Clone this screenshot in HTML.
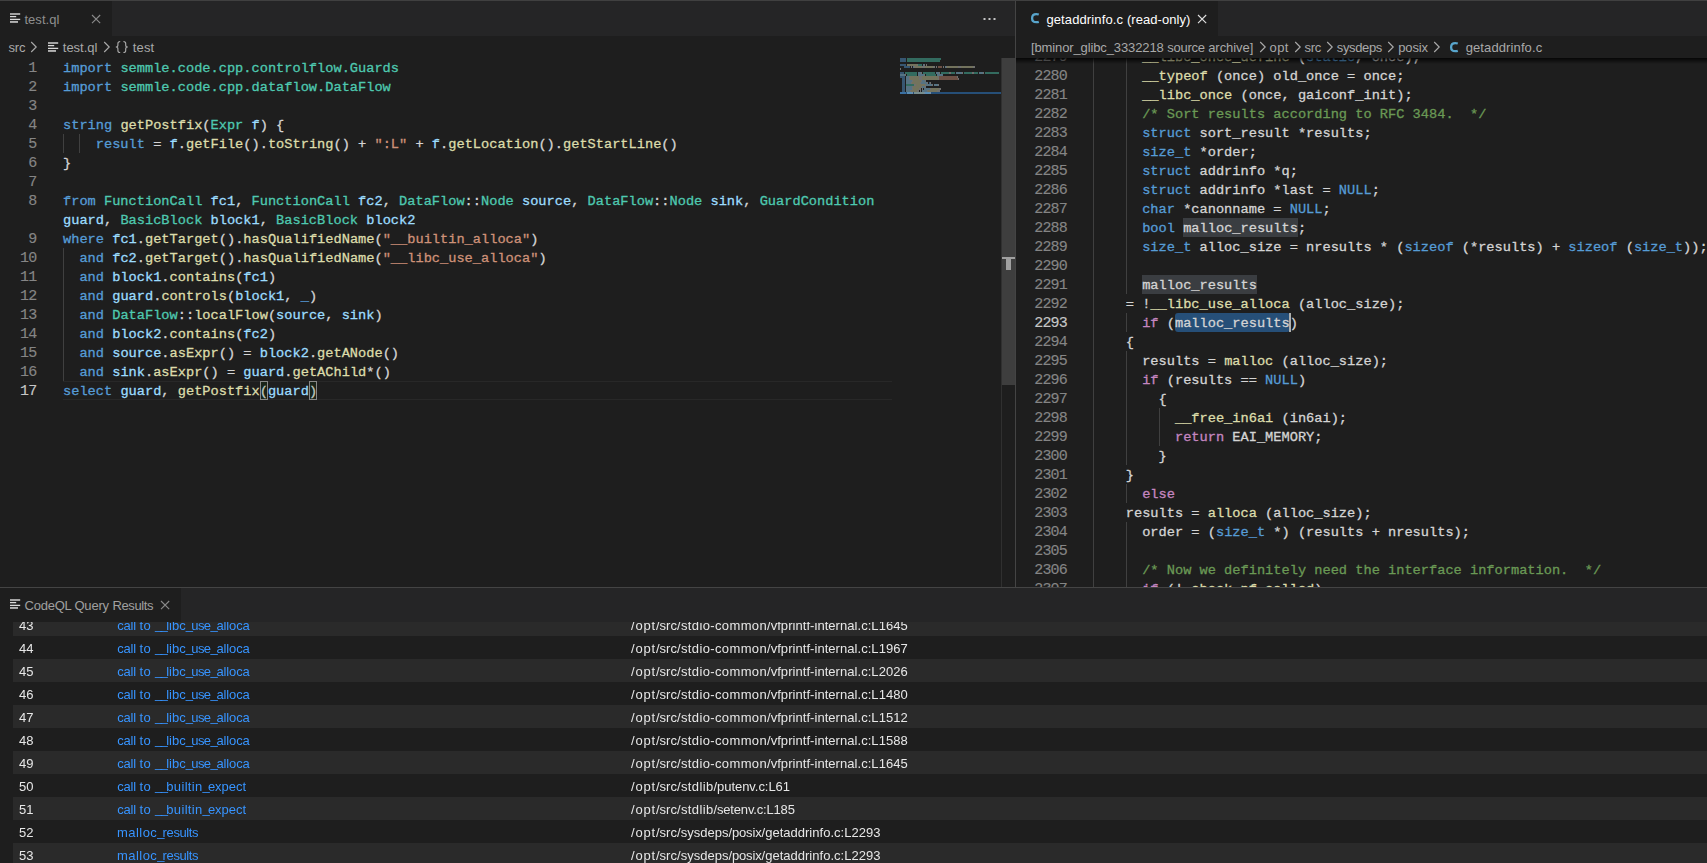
<!DOCTYPE html>
<html><head><meta charset="utf-8"><title>vscode</title>
<style>
html,body{margin:0;padding:0;background:#1e1e1e;}
body{width:1707px;height:863px;overflow:hidden;position:relative;font-family:"Liberation Sans",sans-serif;font-size:13px;color:#ccc;}
div,span{box-sizing:border-box;}
.abs{position:absolute;}
.mono{font-family:"Liberation Mono",monospace;font-size:13.67px;letter-spacing:0px;white-space:pre;color:#d4d4d4;-webkit-text-stroke:0.3px;}
.ln{position:absolute;left:0;height:19px;line-height:21px;}
.num{position:absolute;text-align:right;color:#858585;font-size:15px;letter-spacing:-0.8px;line-height:22px;-webkit-text-stroke:0.15px;}
.num.act{color:#c6c6c6;}
.k{color:#569cd6}.t{color:#4ec9b0}.s{color:#ce9178}.v{color:#9cdcfe}.f{color:#dcdcaa}.c{color:#6a9955}.p{color:#c586c0}
.ui{white-space:pre;position:absolute;}
.row{position:absolute;left:13px;right:0;height:23px;line-height:25px;font-size:13px;color:#e7e7e7;}
.row.o{background:#2a2a2a;}
.row span{position:absolute;top:0;white-space:pre;}
.row .a,.row .pth{left:-13px;}
.row .a{color:#3794ff;}
.guide{position:absolute;width:1px;background:#404040;}
</style></head><body>
<div class="abs" style="left:0;top:0;width:1707px;height:36px;background:#252526"></div>
<div class="abs" style="left:0;top:1px;width:112px;height:35px;background:#1e1e1e"></div>
<div class="abs" style="left:1016px;top:1px;width:202px;height:35px;background:#1e1e1e"></div>
<div class="abs" style="left:0;top:0;width:1707px;height:1px;background:#404040"></div>
<svg class="abs" style="left:10px;top:13px" width="11" height="11" viewBox="0 0 11 11"><rect x="0" y="0.1" width="10.2" height="1.8" fill="#b2b2b2"/><rect x="0" y="2.95" width="6.2" height="1.3" fill="#dadada"/><rect x="0" y="5.75" width="10.2" height="1.3" fill="#dadada"/><rect x="0" y="8.0" width="8" height="1.9" fill="#b2b2b2"/></svg>
<div class="ui" style="left:24.4px;top:12px;font-size:13px;color:#8f8f8f;letter-spacing:0.07px;">test.ql</div>
<svg class="abs" style="left:90.9px;top:14.1px" width="10.2" height="10.2" viewBox="-5.1 -5.1 10.2 10.2"><path d="M-4.1 -4.1 L4.1 4.1 M4.1 -4.1 L-4.1 4.1" stroke="#8a8a8a" stroke-width="1.10" fill="none"/></svg>
<svg class="abs" style="left:982.5px;top:17px" width="14" height="4" viewBox="0 0 14 4"><g fill="#c5c5c5"><rect x="0.5" y="1" width="2" height="2"/><rect x="5.5" y="1" width="2" height="2"/><rect x="10.5" y="1" width="2" height="2"/></g></svg>
<div class="ui" style="left:8.6px;top:40px;font-size:13px;color:#a9a9a9;letter-spacing:-0.24px;">src</div>
<svg class="abs" style="left:30.0px;top:41.0px" width="8" height="12" viewBox="0 0 8 12"><path d="M1.2 1 L6.2 6 L1.2 11" stroke="#a9a9a9" stroke-width="1.15" fill="none"/></svg>
<svg class="abs" style="left:48.3px;top:42px" width="11" height="11" viewBox="0 0 11 11"><rect x="0" y="0.1" width="10.2" height="1.8" fill="#b2b2b2"/><rect x="0" y="2.95" width="6.2" height="1.3" fill="#dadada"/><rect x="0" y="5.75" width="10.2" height="1.3" fill="#dadada"/><rect x="0" y="8.0" width="8" height="1.9" fill="#b2b2b2"/></svg>
<div class="ui" style="left:62.8px;top:40px;font-size:13px;color:#a9a9a9;letter-spacing:-0.01px;">test.ql</div>
<svg class="abs" style="left:102.5px;top:41.0px" width="8" height="12" viewBox="0 0 8 12"><path d="M1.2 1 L6.2 6 L1.2 11" stroke="#a9a9a9" stroke-width="1.15" fill="none"/></svg>
<svg class="abs" style="left:114px;top:40px" width="16" height="14" viewBox="114 40 16 14"><g fill="none" stroke="#a9a9a9" stroke-width="1.15"><path d="M120.2 41.5 C118.4 41.5 117.9 42.1 117.9 43.6 V45.2 C117.9 46.4 117.2 47 115.8 47 C117.2 47 117.9 47.6 117.9 48.8 V50.4 C117.9 51.9 118.4 52.5 120.2 52.5"/><path d="M123.4 41.5 C125.2 41.5 125.7 42.1 125.7 43.6 V45.2 C125.7 46.4 126.4 47 127.8 47 C126.4 47 125.7 47.6 125.7 48.8 V50.4 C125.7 51.9 125.2 52.5 123.4 52.5"/></g></svg>
<div class="ui" style="left:132.8px;top:40px;font-size:13px;color:#a9a9a9;letter-spacing:0.16px;">test</div>
<svg class="abs" style="left:1029.7px;top:11.6px" width="11" height="13" viewBox="-1 -1 11 13"><path d="M7.8 1.5 C6.9 1.2 6.2 1.15 5.3 1.15 C2.6 1.15 1.1 2.8 1.1 5.15 C1.1 7.5 2.6 9.15 5.3 9.15 C6.2 9.15 6.9 9.1 7.8 8.8" stroke="#58a5cc" stroke-width="2.3" fill="none"/></svg>
<div class="ui" style="left:1046.4px;top:12px;font-size:13px;color:#ffffff;letter-spacing:0.12px;">getaddrinfo.c </div>
<div class="ui" style="left:1126.9px;top:12px;font-size:13px;color:#ffffff;letter-spacing:0.06px;">(read-only)</div>
<svg class="abs" style="left:1197.2px;top:14.1px" width="10.2" height="10.2" viewBox="-5.1 -5.1 10.2 10.2"><path d="M-4.1 -4.1 L4.1 4.1 M4.1 -4.1 L-4.1 4.1" stroke="#e0e0e0" stroke-width="1.10" fill="none"/></svg>
<div class="ui" style="left:1031.0px;top:40px;font-size:13px;color:#a9a9a9;letter-spacing:-0.12px;">[bminor_glibc_3332218 </div>
<div class="ui" style="left:1167.2px;top:40px;font-size:13px;color:#a9a9a9;letter-spacing:-0.23px;">source </div>
<div class="ui" style="left:1208.2px;top:40px;font-size:13px;color:#a9a9a9;letter-spacing:-0.06px;">archive]</div>
<div class="ui" style="left:1269.6px;top:40px;font-size:13px;color:#a9a9a9;letter-spacing:0.38px;">opt</div>
<div class="ui" style="left:1304.6px;top:40px;font-size:13px;color:#a9a9a9;letter-spacing:-0.38px;">src</div>
<div class="ui" style="left:1336.8px;top:40px;font-size:13px;color:#a9a9a9;letter-spacing:-0.36px;">sysdeps</div>
<div class="ui" style="left:1398.2px;top:40px;font-size:13px;color:#a9a9a9;letter-spacing:-0.13px;">posix</div>
<svg class="abs" style="left:1258.5px;top:41.0px" width="8" height="12" viewBox="0 0 8 12"><path d="M1.2 1 L6.2 6 L1.2 11" stroke="#a9a9a9" stroke-width="1.15" fill="none"/></svg>
<svg class="abs" style="left:1294.0px;top:41.0px" width="8" height="12" viewBox="0 0 8 12"><path d="M1.2 1 L6.2 6 L1.2 11" stroke="#a9a9a9" stroke-width="1.15" fill="none"/></svg>
<svg class="abs" style="left:1326.0px;top:41.0px" width="8" height="12" viewBox="0 0 8 12"><path d="M1.2 1 L6.2 6 L1.2 11" stroke="#a9a9a9" stroke-width="1.15" fill="none"/></svg>
<svg class="abs" style="left:1387.0px;top:41.0px" width="8" height="12" viewBox="0 0 8 12"><path d="M1.2 1 L6.2 6 L1.2 11" stroke="#a9a9a9" stroke-width="1.15" fill="none"/></svg>
<svg class="abs" style="left:1433.0px;top:41.0px" width="8" height="12" viewBox="0 0 8 12"><path d="M1.2 1 L6.2 6 L1.2 11" stroke="#a9a9a9" stroke-width="1.15" fill="none"/></svg>
<svg class="abs" style="left:1448.8px;top:40.7px" width="11" height="13" viewBox="-1 -1 11 13"><path d="M7.8 1.5 C6.9 1.2 6.2 1.15 5.3 1.15 C2.6 1.15 1.1 2.8 1.1 5.15 C1.1 7.5 2.6 9.15 5.3 9.15 C6.2 9.15 6.9 9.1 7.8 8.8" stroke="#58a5cc" stroke-width="2.3" fill="none"/></svg>
<div class="ui" style="left:1465.7px;top:40px;font-size:13px;color:#a9a9a9;letter-spacing:0.11px;">getaddrinfo.c</div>
<div class="abs mono" style="left:0;top:58px;width:1001px;height:529px;overflow:hidden">
<div class="abs" style="left:63px;top:323px;width:829px;height:19px;border-top:1px solid #282828;border-bottom:1px solid #282828"></div>
<div class="guide" style="left:63px;top:76px;height:19px"></div>
<div class="guide" style="left:79px;top:76px;height:19px"></div>
<div class="guide" style="left:63px;top:190px;height:133px"></div>
<div class="ln" style="top:0px"><span class="num" style="left:0;width:36.5px">1</span><span class="abs" style="left:63px"><span class="k">import</span> <span class="t">semmle.code.cpp.controlflow.Guards</span></span></div>
<div class="ln" style="top:19px"><span class="num" style="left:0;width:36.5px">2</span><span class="abs" style="left:63px"><span class="k">import</span> <span class="t">semmle.code.cpp.dataflow.DataFlow</span></span></div>
<div class="ln" style="top:38px"><span class="num" style="left:0;width:36.5px">3</span><span class="abs" style="left:63px"></span></div>
<div class="ln" style="top:57px"><span class="num" style="left:0;width:36.5px">4</span><span class="abs" style="left:63px"><span class="k">string</span> <span class="f">getPostfix</span>(<span class="t">Expr</span> <span class="v">f</span>) {</span></div>
<div class="ln" style="top:76px"><span class="num" style="left:0;width:36.5px">5</span><span class="abs" style="left:63px">    <span class="k">result</span> = <span class="v">f</span>.<span class="f">getFile</span>().<span class="f">toString</span>() + <span class="s">":L"</span> + <span class="v">f</span>.<span class="f">getLocation</span>().<span class="f">getStartLine</span>()</span></div>
<div class="ln" style="top:95px"><span class="num" style="left:0;width:36.5px">6</span><span class="abs" style="left:63px">}</span></div>
<div class="ln" style="top:114px"><span class="num" style="left:0;width:36.5px">7</span><span class="abs" style="left:63px"></span></div>
<div class="ln" style="top:133px"><span class="num" style="left:0;width:36.5px">8</span><span class="abs" style="left:63px"><span class="k">from</span> <span class="t">FunctionCall</span> <span class="v">fc1</span>, <span class="t">FunctionCall</span> <span class="v">fc2</span>, <span class="t">DataFlow</span>::<span class="t">Node</span> <span class="v">source</span>, <span class="t">DataFlow</span>::<span class="t">Node</span> <span class="v">sink</span>, <span class="t">GuardCondition</span></span></div>
<div class="ln" style="top:152px"><span class="num" style="left:0;width:36.5px"></span><span class="abs" style="left:63px"><span class="v">guard</span>, <span class="t">BasicBlock</span> <span class="v">block1</span>, <span class="t">BasicBlock</span> <span class="v">block2</span></span></div>
<div class="ln" style="top:171px"><span class="num" style="left:0;width:36.5px">9</span><span class="abs" style="left:63px"><span class="k">where</span> <span class="v">fc1</span>.<span class="f">getTarget</span>().<span class="f">hasQualifiedName</span>(<span class="s">"__builtin_alloca"</span>)</span></div>
<div class="ln" style="top:190px"><span class="num" style="left:0;width:36.5px">10</span><span class="abs" style="left:63px">  <span class="k">and</span> <span class="v">fc2</span>.<span class="f">getTarget</span>().<span class="f">hasQualifiedName</span>(<span class="s">"__libc_use_alloca"</span>)</span></div>
<div class="ln" style="top:209px"><span class="num" style="left:0;width:36.5px">11</span><span class="abs" style="left:63px">  <span class="k">and</span> <span class="v">block1</span>.<span class="f">contains</span>(<span class="v">fc1</span>)</span></div>
<div class="ln" style="top:228px"><span class="num" style="left:0;width:36.5px">12</span><span class="abs" style="left:63px">  <span class="k">and</span> <span class="v">guard</span>.<span class="f">controls</span>(<span class="v">block1</span>, <span class="k">_</span>)</span></div>
<div class="ln" style="top:247px"><span class="num" style="left:0;width:36.5px">13</span><span class="abs" style="left:63px">  <span class="k">and</span> <span class="t">DataFlow</span>::<span class="f">localFlow</span>(<span class="v">source</span>, <span class="v">sink</span>)</span></div>
<div class="ln" style="top:266px"><span class="num" style="left:0;width:36.5px">14</span><span class="abs" style="left:63px">  <span class="k">and</span> <span class="v">block2</span>.<span class="f">contains</span>(<span class="v">fc2</span>)</span></div>
<div class="ln" style="top:285px"><span class="num" style="left:0;width:36.5px">15</span><span class="abs" style="left:63px">  <span class="k">and</span> <span class="v">source</span>.<span class="f">asExpr</span>() = <span class="v">block2</span>.<span class="f">getANode</span>()</span></div>
<div class="ln" style="top:304px"><span class="num" style="left:0;width:36.5px">16</span><span class="abs" style="left:63px">  <span class="k">and</span> <span class="v">sink</span>.<span class="f">asExpr</span>() = <span class="v">guard</span>.<span class="f">getAChild</span>*()</span></div>
<div class="ln" style="top:323px"><span class="num act" style="left:0;width:36.5px">17</span><span class="abs" style="left:63px"><span class="k">select</span> <span class="v">guard</span>, <span class="f">getPostfix</span>(<span class="v">guard</span>)</span></div>
<div class="abs" style="left:259.8px;top:323px;width:8.2px;height:19px;border:1px solid #888;background:rgba(0,100,0,0.1)"></div>
<div class="abs" style="left:309.0px;top:323px;width:8.2px;height:19px;border:1px solid #888;background:rgba(0,100,0,0.1)"></div>
</div>
<svg class="abs" style="left:900px;top:58px" width="101" height="40" viewBox="0 0 101 40" shape-rendering="crispEdges"><rect x="0" y="34" width="101" height="2" fill="#264f78"/><rect x="0" y="0" width="6" height="2" fill="#569cd6" opacity="0.45"/><rect x="7" y="0" width="34" height="2" fill="#4ec9b0" opacity="0.45"/><rect x="0" y="2" width="6" height="2" fill="#569cd6" opacity="0.45"/><rect x="7" y="2" width="33" height="2" fill="#4ec9b0" opacity="0.45"/><rect x="0" y="6" width="6" height="2" fill="#569cd6" opacity="0.45"/><rect x="7" y="6" width="10" height="2" fill="#dcdcaa" opacity="0.45"/><rect x="17" y="6" width="1" height="2" fill="#d4d4d4" opacity="0.45"/><rect x="18" y="6" width="4" height="2" fill="#4ec9b0" opacity="0.45"/><rect x="23" y="6" width="1" height="2" fill="#9cdcfe" opacity="0.45"/><rect x="24" y="6" width="1" height="2" fill="#d4d4d4" opacity="0.45"/><rect x="26" y="6" width="1" height="2" fill="#d4d4d4" opacity="0.45"/><rect x="4" y="8" width="6" height="2" fill="#569cd6" opacity="0.45"/><rect x="11" y="8" width="1" height="2" fill="#d4d4d4" opacity="0.45"/><rect x="13" y="8" width="1" height="2" fill="#9cdcfe" opacity="0.45"/><rect x="14" y="8" width="1" height="2" fill="#d4d4d4" opacity="0.45"/><rect x="15" y="8" width="7" height="2" fill="#dcdcaa" opacity="0.45"/><rect x="22" y="8" width="3" height="2" fill="#d4d4d4" opacity="0.45"/><rect x="25" y="8" width="8" height="2" fill="#dcdcaa" opacity="0.45"/><rect x="33" y="8" width="2" height="2" fill="#d4d4d4" opacity="0.45"/><rect x="36" y="8" width="1" height="2" fill="#d4d4d4" opacity="0.45"/><rect x="38" y="8" width="4" height="2" fill="#ce9178" opacity="0.45"/><rect x="43" y="8" width="1" height="2" fill="#d4d4d4" opacity="0.45"/><rect x="45" y="8" width="1" height="2" fill="#9cdcfe" opacity="0.45"/><rect x="46" y="8" width="1" height="2" fill="#d4d4d4" opacity="0.45"/><rect x="47" y="8" width="11" height="2" fill="#dcdcaa" opacity="0.45"/><rect x="58" y="8" width="3" height="2" fill="#d4d4d4" opacity="0.45"/><rect x="61" y="8" width="12" height="2" fill="#dcdcaa" opacity="0.45"/><rect x="73" y="8" width="2" height="2" fill="#d4d4d4" opacity="0.45"/><rect x="0" y="10" width="1" height="2" fill="#d4d4d4" opacity="0.45"/><rect x="0" y="14" width="4" height="2" fill="#569cd6" opacity="0.45"/><rect x="5" y="14" width="12" height="2" fill="#4ec9b0" opacity="0.45"/><rect x="18" y="14" width="3" height="2" fill="#9cdcfe" opacity="0.45"/><rect x="21" y="14" width="1" height="2" fill="#d4d4d4" opacity="0.45"/><rect x="23" y="14" width="12" height="2" fill="#4ec9b0" opacity="0.45"/><rect x="36" y="14" width="3" height="2" fill="#9cdcfe" opacity="0.45"/><rect x="39" y="14" width="1" height="2" fill="#d4d4d4" opacity="0.45"/><rect x="41" y="14" width="8" height="2" fill="#4ec9b0" opacity="0.45"/><rect x="49" y="14" width="2" height="2" fill="#d4d4d4" opacity="0.45"/><rect x="51" y="14" width="4" height="2" fill="#4ec9b0" opacity="0.45"/><rect x="56" y="14" width="6" height="2" fill="#9cdcfe" opacity="0.45"/><rect x="62" y="14" width="1" height="2" fill="#d4d4d4" opacity="0.45"/><rect x="64" y="14" width="8" height="2" fill="#4ec9b0" opacity="0.45"/><rect x="72" y="14" width="2" height="2" fill="#d4d4d4" opacity="0.45"/><rect x="74" y="14" width="4" height="2" fill="#4ec9b0" opacity="0.45"/><rect x="79" y="14" width="4" height="2" fill="#9cdcfe" opacity="0.45"/><rect x="83" y="14" width="1" height="2" fill="#d4d4d4" opacity="0.45"/><rect x="85" y="14" width="14" height="2" fill="#4ec9b0" opacity="0.45"/><rect x="0" y="16" width="5" height="2" fill="#9cdcfe" opacity="0.45"/><rect x="5" y="16" width="1" height="2" fill="#d4d4d4" opacity="0.45"/><rect x="7" y="16" width="10" height="2" fill="#4ec9b0" opacity="0.45"/><rect x="18" y="16" width="6" height="2" fill="#9cdcfe" opacity="0.45"/><rect x="24" y="16" width="1" height="2" fill="#d4d4d4" opacity="0.45"/><rect x="26" y="16" width="10" height="2" fill="#4ec9b0" opacity="0.45"/><rect x="37" y="16" width="6" height="2" fill="#9cdcfe" opacity="0.45"/><rect x="0" y="18" width="5" height="2" fill="#569cd6" opacity="0.45"/><rect x="6" y="18" width="3" height="2" fill="#9cdcfe" opacity="0.45"/><rect x="9" y="18" width="1" height="2" fill="#d4d4d4" opacity="0.45"/><rect x="10" y="18" width="9" height="2" fill="#dcdcaa" opacity="0.45"/><rect x="19" y="18" width="3" height="2" fill="#d4d4d4" opacity="0.45"/><rect x="22" y="18" width="16" height="2" fill="#dcdcaa" opacity="0.45"/><rect x="38" y="18" width="1" height="2" fill="#d4d4d4" opacity="0.45"/><rect x="39" y="18" width="18" height="2" fill="#ce9178" opacity="0.45"/><rect x="57" y="18" width="1" height="2" fill="#d4d4d4" opacity="0.45"/><rect x="2" y="20" width="3" height="2" fill="#569cd6" opacity="0.45"/><rect x="6" y="20" width="3" height="2" fill="#9cdcfe" opacity="0.45"/><rect x="9" y="20" width="1" height="2" fill="#d4d4d4" opacity="0.45"/><rect x="10" y="20" width="9" height="2" fill="#dcdcaa" opacity="0.45"/><rect x="19" y="20" width="3" height="2" fill="#d4d4d4" opacity="0.45"/><rect x="22" y="20" width="16" height="2" fill="#dcdcaa" opacity="0.45"/><rect x="38" y="20" width="1" height="2" fill="#d4d4d4" opacity="0.45"/><rect x="39" y="20" width="19" height="2" fill="#ce9178" opacity="0.45"/><rect x="58" y="20" width="1" height="2" fill="#d4d4d4" opacity="0.45"/><rect x="2" y="22" width="3" height="2" fill="#569cd6" opacity="0.45"/><rect x="6" y="22" width="6" height="2" fill="#9cdcfe" opacity="0.45"/><rect x="12" y="22" width="1" height="2" fill="#d4d4d4" opacity="0.45"/><rect x="13" y="22" width="8" height="2" fill="#dcdcaa" opacity="0.45"/><rect x="21" y="22" width="1" height="2" fill="#d4d4d4" opacity="0.45"/><rect x="22" y="22" width="3" height="2" fill="#9cdcfe" opacity="0.45"/><rect x="25" y="22" width="1" height="2" fill="#d4d4d4" opacity="0.45"/><rect x="2" y="24" width="3" height="2" fill="#569cd6" opacity="0.45"/><rect x="6" y="24" width="5" height="2" fill="#9cdcfe" opacity="0.45"/><rect x="11" y="24" width="1" height="2" fill="#d4d4d4" opacity="0.45"/><rect x="12" y="24" width="8" height="2" fill="#dcdcaa" opacity="0.45"/><rect x="20" y="24" width="1" height="2" fill="#d4d4d4" opacity="0.45"/><rect x="21" y="24" width="6" height="2" fill="#9cdcfe" opacity="0.45"/><rect x="27" y="24" width="1" height="2" fill="#d4d4d4" opacity="0.45"/><rect x="29" y="24" width="1" height="2" fill="#569cd6" opacity="0.45"/><rect x="30" y="24" width="1" height="2" fill="#d4d4d4" opacity="0.45"/><rect x="2" y="26" width="3" height="2" fill="#569cd6" opacity="0.45"/><rect x="6" y="26" width="8" height="2" fill="#4ec9b0" opacity="0.45"/><rect x="14" y="26" width="2" height="2" fill="#d4d4d4" opacity="0.45"/><rect x="16" y="26" width="9" height="2" fill="#dcdcaa" opacity="0.45"/><rect x="25" y="26" width="1" height="2" fill="#d4d4d4" opacity="0.45"/><rect x="26" y="26" width="6" height="2" fill="#9cdcfe" opacity="0.45"/><rect x="32" y="26" width="1" height="2" fill="#d4d4d4" opacity="0.45"/><rect x="34" y="26" width="4" height="2" fill="#9cdcfe" opacity="0.45"/><rect x="38" y="26" width="1" height="2" fill="#d4d4d4" opacity="0.45"/><rect x="2" y="28" width="3" height="2" fill="#569cd6" opacity="0.45"/><rect x="6" y="28" width="6" height="2" fill="#9cdcfe" opacity="0.45"/><rect x="12" y="28" width="1" height="2" fill="#d4d4d4" opacity="0.45"/><rect x="13" y="28" width="8" height="2" fill="#dcdcaa" opacity="0.45"/><rect x="21" y="28" width="1" height="2" fill="#d4d4d4" opacity="0.45"/><rect x="22" y="28" width="3" height="2" fill="#9cdcfe" opacity="0.45"/><rect x="25" y="28" width="1" height="2" fill="#d4d4d4" opacity="0.45"/><rect x="2" y="30" width="3" height="2" fill="#569cd6" opacity="0.45"/><rect x="6" y="30" width="6" height="2" fill="#9cdcfe" opacity="0.45"/><rect x="12" y="30" width="1" height="2" fill="#d4d4d4" opacity="0.45"/><rect x="13" y="30" width="6" height="2" fill="#dcdcaa" opacity="0.45"/><rect x="19" y="30" width="2" height="2" fill="#d4d4d4" opacity="0.45"/><rect x="22" y="30" width="1" height="2" fill="#d4d4d4" opacity="0.45"/><rect x="24" y="30" width="6" height="2" fill="#9cdcfe" opacity="0.45"/><rect x="30" y="30" width="1" height="2" fill="#d4d4d4" opacity="0.45"/><rect x="31" y="30" width="8" height="2" fill="#dcdcaa" opacity="0.45"/><rect x="39" y="30" width="2" height="2" fill="#d4d4d4" opacity="0.45"/><rect x="2" y="32" width="3" height="2" fill="#569cd6" opacity="0.45"/><rect x="6" y="32" width="4" height="2" fill="#9cdcfe" opacity="0.45"/><rect x="10" y="32" width="1" height="2" fill="#d4d4d4" opacity="0.45"/><rect x="11" y="32" width="6" height="2" fill="#dcdcaa" opacity="0.45"/><rect x="17" y="32" width="2" height="2" fill="#d4d4d4" opacity="0.45"/><rect x="20" y="32" width="1" height="2" fill="#d4d4d4" opacity="0.45"/><rect x="22" y="32" width="5" height="2" fill="#9cdcfe" opacity="0.45"/><rect x="27" y="32" width="1" height="2" fill="#d4d4d4" opacity="0.45"/><rect x="28" y="32" width="9" height="2" fill="#dcdcaa" opacity="0.45"/><rect x="37" y="32" width="3" height="2" fill="#d4d4d4" opacity="0.45"/><rect x="0" y="34" width="6" height="2" fill="#569cd6" opacity="0.45"/><rect x="7" y="34" width="5" height="2" fill="#9cdcfe" opacity="0.45"/><rect x="12" y="34" width="1" height="2" fill="#d4d4d4" opacity="0.45"/><rect x="14" y="34" width="10" height="2" fill="#dcdcaa" opacity="0.45"/><rect x="24" y="34" width="1" height="2" fill="#d4d4d4" opacity="0.45"/><rect x="25" y="34" width="5" height="2" fill="#9cdcfe" opacity="0.45"/><rect x="30" y="34" width="1" height="2" fill="#d4d4d4" opacity="0.45"/></svg>
<div class="abs" style="left:1001px;top:58px;width:14px;height:529px;border-left:1px solid #303030"></div>
<div class="abs" style="left:1002px;top:58px;width:13px;height:327px;background:#3e3e3e"></div>
<div class="abs" style="left:1002px;top:257px;width:13px;height:2px;background:#a0a0a0"></div>
<div class="abs" style="left:1006px;top:259px;width:5px;height:11px;background:#a0a0a0"></div>
<div class="abs" style="left:1015px;top:1px;width:1px;height:586px;background:#444"></div>
<div class="abs mono" style="left:1016px;top:58px;width:691px;height:529px;overflow:hidden">
<div class="guide" style="left:77px;top:0;height:529px"></div>
<div class="guide" style="left:110px;top:-11px;height:247px"></div>
<div class="guide" style="left:110px;top:255px;height:19px"></div>
<div class="guide" style="left:110px;top:293px;height:114px"></div>
<div class="guide" style="left:110px;top:426px;height:19px"></div>
<div class="guide" style="left:110px;top:464px;height:76px"></div>
<div class="guide" style="left:143px;top:350px;height:38px"></div>
<div class="abs" style="left:167.2px;top:160px;width:114.8px;height:19px;background:#3a3d41;"></div>
<div class="abs" style="left:126.2px;top:217px;width:114.8px;height:19px;background:#3a3d41;"></div>
<div class="abs" style="left:159.0px;top:255px;width:114.8px;height:19px;background:#264f78;border-radius:3px"></div>
<div class="ln" style="top:-11px"><span class="num" style="left:0;width:51px">2279</span><span class="abs" style="left:77.0px">      <span class="f">__libc_once_define</span> (<span class="k">static</span>, once);</span></div>
<div class="ln" style="top:8px"><span class="num" style="left:0;width:51px">2280</span><span class="abs" style="left:77.0px">      <span class="f">__typeof</span> (once) old_once = once;</span></div>
<div class="ln" style="top:27px"><span class="num" style="left:0;width:51px">2281</span><span class="abs" style="left:77.0px">      <span class="f">__libc_once</span> (once, gaiconf_init);</span></div>
<div class="ln" style="top:46px"><span class="num" style="left:0;width:51px">2282</span><span class="abs" style="left:77.0px">      <span class="c">/* Sort results according to RFC 3484.  */</span></span></div>
<div class="ln" style="top:65px"><span class="num" style="left:0;width:51px">2283</span><span class="abs" style="left:77.0px">      <span class="k">struct</span> sort_result *results;</span></div>
<div class="ln" style="top:84px"><span class="num" style="left:0;width:51px">2284</span><span class="abs" style="left:77.0px">      <span class="k">size_t</span> *order;</span></div>
<div class="ln" style="top:103px"><span class="num" style="left:0;width:51px">2285</span><span class="abs" style="left:77.0px">      <span class="k">struct</span> addrinfo *q;</span></div>
<div class="ln" style="top:122px"><span class="num" style="left:0;width:51px">2286</span><span class="abs" style="left:77.0px">      <span class="k">struct</span> addrinfo *last = <span class="k">NULL</span>;</span></div>
<div class="ln" style="top:141px"><span class="num" style="left:0;width:51px">2287</span><span class="abs" style="left:77.0px">      <span class="k">char</span> *canonname = <span class="k">NULL</span>;</span></div>
<div class="ln" style="top:160px"><span class="num" style="left:0;width:51px">2288</span><span class="abs" style="left:77.0px">      <span class="k">bool</span> <span class="hl">malloc_results</span>;</span></div>
<div class="ln" style="top:179px"><span class="num" style="left:0;width:51px">2289</span><span class="abs" style="left:77.0px">      <span class="k">size_t</span> alloc_size = nresults * (<span class="k">sizeof</span> (*results) + <span class="k">sizeof</span> (<span class="k">size_t</span>));</span></div>
<div class="ln" style="top:198px"><span class="num" style="left:0;width:51px">2290</span><span class="abs" style="left:77.0px"></span></div>
<div class="ln" style="top:217px"><span class="num" style="left:0;width:51px">2291</span><span class="abs" style="left:77.0px">      <span class="hl">malloc_results</span></span></div>
<div class="ln" style="top:236px"><span class="num" style="left:0;width:51px">2292</span><span class="abs" style="left:77.0px">    = !<span class="f">__libc_use_alloca</span> (alloc_size);</span></div>
<div class="ln" style="top:255px"><span class="num act" style="left:0;width:51px">2293</span><span class="abs" style="left:77.0px">      <span class="p">if</span> (<span class="sel">malloc_results</span>)</span></div>
<div class="ln" style="top:274px"><span class="num" style="left:0;width:51px">2294</span><span class="abs" style="left:77.0px">    {</span></div>
<div class="ln" style="top:293px"><span class="num" style="left:0;width:51px">2295</span><span class="abs" style="left:77.0px">      results = <span class="f">malloc</span> (alloc_size);</span></div>
<div class="ln" style="top:312px"><span class="num" style="left:0;width:51px">2296</span><span class="abs" style="left:77.0px">      <span class="p">if</span> (results == <span class="k">NULL</span>)</span></div>
<div class="ln" style="top:331px"><span class="num" style="left:0;width:51px">2297</span><span class="abs" style="left:77.0px">        {</span></div>
<div class="ln" style="top:350px"><span class="num" style="left:0;width:51px">2298</span><span class="abs" style="left:77.0px">          <span class="f">__free_in6ai</span> (in6ai);</span></div>
<div class="ln" style="top:369px"><span class="num" style="left:0;width:51px">2299</span><span class="abs" style="left:77.0px">          <span class="p">return</span> EAI_MEMORY;</span></div>
<div class="ln" style="top:388px"><span class="num" style="left:0;width:51px">2300</span><span class="abs" style="left:77.0px">        }</span></div>
<div class="ln" style="top:407px"><span class="num" style="left:0;width:51px">2301</span><span class="abs" style="left:77.0px">    }</span></div>
<div class="ln" style="top:426px"><span class="num" style="left:0;width:51px">2302</span><span class="abs" style="left:77.0px">      <span class="p">else</span></span></div>
<div class="ln" style="top:445px"><span class="num" style="left:0;width:51px">2303</span><span class="abs" style="left:77.0px">    results = <span class="f">alloca</span> (alloc_size);</span></div>
<div class="ln" style="top:464px"><span class="num" style="left:0;width:51px">2304</span><span class="abs" style="left:77.0px">      order = (<span class="k">size_t</span> *) (results + nresults);</span></div>
<div class="ln" style="top:483px"><span class="num" style="left:0;width:51px">2305</span><span class="abs" style="left:77.0px"></span></div>
<div class="ln" style="top:502px"><span class="num" style="left:0;width:51px">2306</span><span class="abs" style="left:77.0px">      <span class="c">/* Now we definitely need the interface information.  */</span></span></div>
<div class="ln" style="top:521px"><span class="num" style="left:0;width:51px">2307</span><span class="abs" style="left:77.0px">      <span class="p">if</span> (! <span class="f">check_pf_called</span>)</span></div>
<div class="abs" style="left:272.8px;top:255px;width:2px;height:19px;background:#aeafad"></div>
<div class="abs" style="left:0;top:0;width:691px;height:6px;background:linear-gradient(#000000cc,#00000000)"></div>
</div>
<div class="abs" style="left:0;top:587px;width:1707px;height:1px;background:#444"></div>
<div class="abs" style="left:0;top:588px;width:1707px;height:34px;background:#252526"></div>
<div class="abs" style="left:0;top:588px;width:181px;height:34px;background:#1e1e1e"></div>
<svg class="abs" style="left:10px;top:599px" width="11" height="11" viewBox="0 0 11 11"><rect x="0" y="0.1" width="10.2" height="1.8" fill="#b2b2b2"/><rect x="0" y="2.95" width="6.2" height="1.3" fill="#dadada"/><rect x="0" y="5.75" width="10.2" height="1.3" fill="#dadada"/><rect x="0" y="8.0" width="8" height="1.9" fill="#b2b2b2"/></svg>
<div class="ui" style="left:24.6px;top:598px;font-size:13px;color:#a0a0a0;letter-spacing:-0.25px;">CodeQL </div>
<div class="ui" style="left:74.4px;top:598px;font-size:13px;color:#a0a0a0;letter-spacing:-0.17px;">Query </div>
<div class="ui" style="left:112.4px;top:598px;font-size:13px;color:#a0a0a0;letter-spacing:-0.36px;">Results</div>
<svg class="abs" style="left:159.9px;top:600.1px" width="10.2" height="10.2" viewBox="-5.1 -5.1 10.2 10.2"><path d="M-4.1 -4.1 L4.1 4.1 M4.1 -4.1 L-4.1 4.1" stroke="#8a8a8a" stroke-width="1.10" fill="none"/></svg>
<div class="abs" style="left:0;top:622px;width:1707px;height:241px;overflow:hidden;background:#1e1e1e">
<div class="row o" style="top:-9px"></div>
<div class="row o" style="top:37px"></div>
<div class="row o" style="top:83px"></div>
<div class="row o" style="top:129px"></div>
<div class="row o" style="top:175px"></div>
<div class="row o" style="top:221px"></div>
</div>
<div class="abs" style="left:0;top:622px;width:1707px;height:241px;overflow:hidden;will-change:transform">
<div class="row" style="top:-9px"><span style="left:6px">43</span><span class="a"><span style="left:117.2px;letter-spacing:-0.16px">call </span><span style="left:139.5px;letter-spacing:0.35px">to </span><span style="left:155.0px;letter-spacing:-1.63px;top:-1px">__</span><span style="left:166.2px;letter-spacing:-0.00px">libc</span><span style="left:185.7px;letter-spacing:-1.63px;top:-1px">_</span><span style="left:191.3px;letter-spacing:-0.59px">use</span><span style="left:210.5px;letter-spacing:-1.33px;top:-1px">_</span><span style="left:216.4px;letter-spacing:-0.11px">alloca</span></span><span class="pth"><span style="left:631.0px;letter-spacing:0.80px">/opt</span><span style="left:655.9px;letter-spacing:0.04px">/src</span><span style="left:677.0px;letter-spacing:0.37px">/stdio-common</span><span style="left:767.0px;letter-spacing:0.05px">/vfprintf-internal.c:L1645</span></span></div>
<div class="row" style="top:14px"><span style="left:6px">44</span><span class="a"><span style="left:117.2px;letter-spacing:-0.16px">call </span><span style="left:139.5px;letter-spacing:0.35px">to </span><span style="left:155.0px;letter-spacing:-1.63px;top:-1px">__</span><span style="left:166.2px;letter-spacing:-0.00px">libc</span><span style="left:185.7px;letter-spacing:-1.63px;top:-1px">_</span><span style="left:191.3px;letter-spacing:-0.59px">use</span><span style="left:210.5px;letter-spacing:-1.33px;top:-1px">_</span><span style="left:216.4px;letter-spacing:-0.11px">alloca</span></span><span class="pth"><span style="left:631.0px;letter-spacing:0.80px">/opt</span><span style="left:655.9px;letter-spacing:0.04px">/src</span><span style="left:677.0px;letter-spacing:0.37px">/stdio-common</span><span style="left:767.0px;letter-spacing:0.05px">/vfprintf-internal.c:L1967</span></span></div>
<div class="row" style="top:37px"><span style="left:6px">45</span><span class="a"><span style="left:117.2px;letter-spacing:-0.16px">call </span><span style="left:139.5px;letter-spacing:0.35px">to </span><span style="left:155.0px;letter-spacing:-1.63px;top:-1px">__</span><span style="left:166.2px;letter-spacing:-0.00px">libc</span><span style="left:185.7px;letter-spacing:-1.63px;top:-1px">_</span><span style="left:191.3px;letter-spacing:-0.59px">use</span><span style="left:210.5px;letter-spacing:-1.33px;top:-1px">_</span><span style="left:216.4px;letter-spacing:-0.11px">alloca</span></span><span class="pth"><span style="left:631.0px;letter-spacing:0.80px">/opt</span><span style="left:655.9px;letter-spacing:0.04px">/src</span><span style="left:677.0px;letter-spacing:0.37px">/stdio-common</span><span style="left:767.0px;letter-spacing:0.05px">/vfprintf-internal.c:L2026</span></span></div>
<div class="row" style="top:60px"><span style="left:6px">46</span><span class="a"><span style="left:117.2px;letter-spacing:-0.16px">call </span><span style="left:139.5px;letter-spacing:0.35px">to </span><span style="left:155.0px;letter-spacing:-1.63px;top:-1px">__</span><span style="left:166.2px;letter-spacing:-0.00px">libc</span><span style="left:185.7px;letter-spacing:-1.63px;top:-1px">_</span><span style="left:191.3px;letter-spacing:-0.59px">use</span><span style="left:210.5px;letter-spacing:-1.33px;top:-1px">_</span><span style="left:216.4px;letter-spacing:-0.11px">alloca</span></span><span class="pth"><span style="left:631.0px;letter-spacing:0.80px">/opt</span><span style="left:655.9px;letter-spacing:0.04px">/src</span><span style="left:677.0px;letter-spacing:0.37px">/stdio-common</span><span style="left:767.0px;letter-spacing:0.05px">/vfprintf-internal.c:L1480</span></span></div>
<div class="row" style="top:83px"><span style="left:6px">47</span><span class="a"><span style="left:117.2px;letter-spacing:-0.16px">call </span><span style="left:139.5px;letter-spacing:0.35px">to </span><span style="left:155.0px;letter-spacing:-1.63px;top:-1px">__</span><span style="left:166.2px;letter-spacing:-0.00px">libc</span><span style="left:185.7px;letter-spacing:-1.63px;top:-1px">_</span><span style="left:191.3px;letter-spacing:-0.59px">use</span><span style="left:210.5px;letter-spacing:-1.33px;top:-1px">_</span><span style="left:216.4px;letter-spacing:-0.11px">alloca</span></span><span class="pth"><span style="left:631.0px;letter-spacing:0.80px">/opt</span><span style="left:655.9px;letter-spacing:0.04px">/src</span><span style="left:677.0px;letter-spacing:0.37px">/stdio-common</span><span style="left:767.0px;letter-spacing:0.05px">/vfprintf-internal.c:L1512</span></span></div>
<div class="row" style="top:106px"><span style="left:6px">48</span><span class="a"><span style="left:117.2px;letter-spacing:-0.16px">call </span><span style="left:139.5px;letter-spacing:0.35px">to </span><span style="left:155.0px;letter-spacing:-1.63px;top:-1px">__</span><span style="left:166.2px;letter-spacing:-0.00px">libc</span><span style="left:185.7px;letter-spacing:-1.63px;top:-1px">_</span><span style="left:191.3px;letter-spacing:-0.59px">use</span><span style="left:210.5px;letter-spacing:-1.33px;top:-1px">_</span><span style="left:216.4px;letter-spacing:-0.11px">alloca</span></span><span class="pth"><span style="left:631.0px;letter-spacing:0.80px">/opt</span><span style="left:655.9px;letter-spacing:0.04px">/src</span><span style="left:677.0px;letter-spacing:0.37px">/stdio-common</span><span style="left:767.0px;letter-spacing:0.05px">/vfprintf-internal.c:L1588</span></span></div>
<div class="row" style="top:129px"><span style="left:6px">49</span><span class="a"><span style="left:117.2px;letter-spacing:-0.16px">call </span><span style="left:139.5px;letter-spacing:0.35px">to </span><span style="left:155.0px;letter-spacing:-1.63px;top:-1px">__</span><span style="left:166.2px;letter-spacing:-0.00px">libc</span><span style="left:185.7px;letter-spacing:-1.63px;top:-1px">_</span><span style="left:191.3px;letter-spacing:-0.59px">use</span><span style="left:210.5px;letter-spacing:-1.33px;top:-1px">_</span><span style="left:216.4px;letter-spacing:-0.11px">alloca</span></span><span class="pth"><span style="left:631.0px;letter-spacing:0.80px">/opt</span><span style="left:655.9px;letter-spacing:0.04px">/src</span><span style="left:677.0px;letter-spacing:0.37px">/stdio-common</span><span style="left:767.0px;letter-spacing:0.05px">/vfprintf-internal.c:L1645</span></span></div>
<div class="row" style="top:152px"><span style="left:6px">50</span><span class="a"><span style="left:117.2px;letter-spacing:-0.16px">call </span><span style="left:139.5px;letter-spacing:0.35px">to </span><span style="left:155.0px;letter-spacing:-1.58px;top:-1px">__</span><span style="left:166.3px;letter-spacing:0.33px">builtin</span><span style="left:202.6px;letter-spacing:-1.93px;top:-1px">_</span><span style="left:207.9px;letter-spacing:-0.03px">expect</span></span><span class="pth"><span style="left:631.0px;letter-spacing:0.80px">/opt</span><span style="left:655.9px;letter-spacing:0.04px">/src</span><span style="left:677.0px;letter-spacing:0.36px">/stdlib</span><span style="left:713.5px;letter-spacing:-0.05px">/putenv.c:L61</span></span></div>
<div class="row" style="top:175px"><span style="left:6px">51</span><span class="a"><span style="left:117.2px;letter-spacing:-0.16px">call </span><span style="left:139.5px;letter-spacing:0.35px">to </span><span style="left:155.0px;letter-spacing:-1.58px;top:-1px">__</span><span style="left:166.3px;letter-spacing:0.33px">builtin</span><span style="left:202.6px;letter-spacing:-1.93px;top:-1px">_</span><span style="left:207.9px;letter-spacing:-0.03px">expect</span></span><span class="pth"><span style="left:631.0px;letter-spacing:0.80px">/opt</span><span style="left:655.9px;letter-spacing:0.04px">/src</span><span style="left:677.0px;letter-spacing:0.36px">/stdlib</span><span style="left:713.5px;letter-spacing:-0.17px">/setenv.c:L185</span></span></div>
<div class="row" style="top:198px"><span style="left:6px">52</span><span class="a"><span style="left:117.0px;letter-spacing:0.46px">malloc</span><span style="left:157.3px;letter-spacing:-1.93px;top:-1px">_</span><span style="left:162.6px;letter-spacing:-0.38px">results</span></span><span class="pth"><span style="left:631.0px;letter-spacing:0.80px">/opt</span><span style="left:655.9px;letter-spacing:0.04px">/src</span><span style="left:677.0px;letter-spacing:0.02px">/sysdeps</span><span style="left:728.5px;letter-spacing:-0.16px">/posix</span><span style="left:761.5px;letter-spacing:0.02px">/getaddrinfo.c:L2293</span></span></div>
<div class="row" style="top:221px"><span style="left:6px">53</span><span class="a"><span style="left:117.0px;letter-spacing:0.46px">malloc</span><span style="left:157.3px;letter-spacing:-1.93px;top:-1px">_</span><span style="left:162.6px;letter-spacing:-0.38px">results</span></span><span class="pth"><span style="left:631.0px;letter-spacing:0.80px">/opt</span><span style="left:655.9px;letter-spacing:0.04px">/src</span><span style="left:677.0px;letter-spacing:0.02px">/sysdeps</span><span style="left:728.5px;letter-spacing:-0.16px">/posix</span><span style="left:761.5px;letter-spacing:0.02px">/getaddrinfo.c:L2293</span></span></div>
</div>
</body></html>
